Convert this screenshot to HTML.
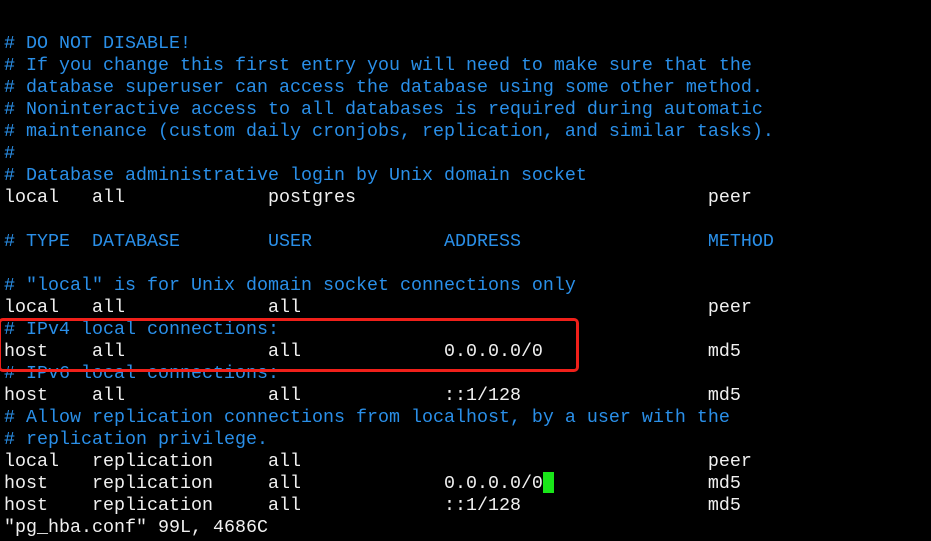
<!DOCTYPE html><html><head><style>
body{margin:0;background:#000;width:931px;height:541px;overflow:hidden;position:relative}
pre{position:absolute;left:4px;top:33px;margin:0;font-family:"Liberation Mono",monospace;font-size:18.33px;line-height:22px;color:#f0f0f0}
.c{color:#2a8fe8}
.box{position:absolute;left:-2px;top:318px;width:575px;height:48px;border:3px solid #f0201a;border-radius:5px}
.cur{position:absolute;left:543px;top:472px;width:11px;height:21px;background:#19e619}
</style></head><body>
<pre><span class="c"># DO NOT DISABLE!
# If you change this first entry you will need to make sure that the
# database superuser can access the database using some other method.
# Noninteractive access to all databases is required during automatic
# maintenance (custom daily cronjobs, replication, and similar tasks).
#
# Database administrative login by Unix domain socket</span>
local   all             postgres                                peer

<span class="c"># TYPE  DATABASE        USER            ADDRESS                 METHOD</span>

<span class="c"># "local" is for Unix domain socket connections only</span>
local   all             all                                     peer
<span class="c"># IPv4 local connections:</span>
host    all             all             0.0.0.0/0               md5
<span class="c"># IPv6 local connections:</span>
host    all             all             ::1/128                 md5
<span class="c"># Allow replication connections from localhost, by a user with the
# replication privilege.</span>
local   replication     all                                     peer
host    replication     all             0.0.0.0/0               md5
host    replication     all             ::1/128                 md5
"pg_hba.conf" 99L, 4686C</pre>
<div class="box"></div><div class="cur"></div>
</body></html>
